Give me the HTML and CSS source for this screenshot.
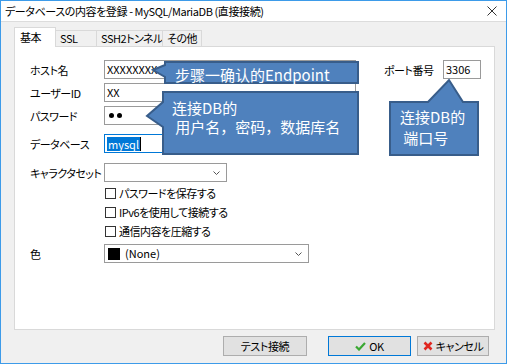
FILE: index.html
```html
<!DOCTYPE html>
<html>
<head>
    <title>データベースの内容を登録</title>
    <link rel="stylesheet" href="styles.css">
</head>
<body>
    <div class="window">
        <div class="titlebar">
            <span class="title">データベースの内容を登録 - MySQL/MariaDB (直接接続)</span>
            <svg class="close" width="10" height="10" viewBox="0 0 10 10">
                <path d="M0.5,0.5 L9.5,9.5 M9.5,0.5 L0.5,9.5" stroke="#333" stroke-width="1" fill="none"/>
            </svg>
        </div>

        <div class="tabs">
            <div class="tab active">基本</div>
            <div class="tab tab-ssl">SSL</div>
            <div class="tab tab-ssh">SSH2トンネル</div>
            <div class="tab tab-other">その他</div>
        </div>

        <div class="panel">
            <div class="row row-host">
                <span class="label">ホスト名</span>
                <div class="field wide">XXXXXXXX</div>
                <span class="label port-label">ポート番号</span>
                <div class="field port">3306</div>
            </div>
            <div class="row row-user">
                <span class="label">ユーザーID</span>
                <div class="field wide">XX</div>
            </div>
            <div class="row row-pw">
                <span class="label">パスワード</span>
                <div class="field wide"><span class="dot"></span><span class="dot"></span></div>
            </div>
            <div class="row row-db">
                <span class="label">データベース</span>
                <div class="field wide focused"><span class="selected">mysql</span><span class="caret"></span></div>
            </div>
            <div class="row row-charset">
                <span class="label">キャラクタセット</span>
                <div class="field combo charset">
                    <svg class="chevron" width="7" height="4" viewBox="0 0 7 4"><path d="M0.5,0.5 L3.5,3.5 L6.5,0.5" stroke="#555" fill="none"/></svg>
                </div>
            </div>
            <div class="check check-first"><span class="box"></span>パスワードを保存する</div>
            <div class="check"><span class="box"></span>IPv6を使用して接続する</div>
            <div class="check"><span class="box"></span>通信内容を圧縮する</div>
            <div class="row row-color">
                <span class="label">色</span>
                <div class="field combo color">
                    <span class="swatch"></span>(None)
                    <svg class="chevron" width="7" height="4" viewBox="0 0 7 4"><path d="M0.5,0.5 L3.5,3.5 L6.5,0.5" stroke="#555" fill="none"/></svg>
                </div>
            </div>
        </div>

        <div class="buttons">
            <button class="btn btn-test">テスト接続</button>
            <button class="btn btn-ok">
                <svg width="11" height="9" viewBox="0 0 11 9"><path d="M1,4.5 L4,7.5 L10,1" stroke="#3aa832" stroke-width="2.2" fill="none"/></svg>OK
            </button>
            <button class="btn btn-cancel">
                <svg width="10" height="10" viewBox="0 0 10 10"><path d="M1.5,1.5 L8.5,8.5 M8.5,1.5 L1.5,8.5" stroke="#e0261f" stroke-width="2.6" fill="none"/></svg>キャンセル
            </button>
        </div>

        <!-- annotation callouts drawn over the dialog -->
        <svg class="callouts" width="507" height="364" viewBox="0 0 507 364">
            <path d="M165,62 H358 V83 H165 V77 L153,70 L165,65 Z"/>
            <path d="M163,92 H358 V154 H163 V127 L147,116 L163,102 Z"/>
            <path d="M390,102 H428 L449,80 L463,102 H478 V155 H390 Z"/>
        </svg>
        <div class="note note-host">步骤一确认的Endpoint</div>
        <div class="note note-user">连接DB的<br>&nbsp;用户名，密码，数据库名</div>
        <div class="note note-port">连接DB的<br>&nbsp;端口号</div>
    </div>
</body>
</html>
```

FILE: styles.css
```css
/* Page */
body {
    margin: 0;
    font-family: "Noto Sans CJK JP", "Noto Sans", sans-serif;
    font-size: 11px;
    letter-spacing: -0.5px;
    font-feature-settings: "palt";
    color: #000;
    background-color: #fff;
}

/* Dialog window */
.window {
    position: relative;
    width: 507px;
    height: 364px;
    box-sizing: border-box;
    border: 1px solid #3d9be9;
    background-color: #f0f0f0;
}

.titlebar {
    display: flex;
    align-items: center;
    justify-content: space-between;
    height: 20px;
    padding: 0 9px 0 4px;
    background-color: #fff;
    border-bottom: 1px solid #dcdcdc;
}

    .titlebar .title {
        font-size: 11px;
        letter-spacing: -0.4px;
    }

/* Tabs */
.tabs {
    display: flex;
    align-items: flex-end;
    height: 19px;
    margin-top: 5px;
    padding-left: 13px;
}

.tab {
    position: relative;
    flex-shrink: 0;
    box-sizing: border-box;
    height: 16px;
    line-height: 15px;
    padding-left: 4px;
    white-space: nowrap;
    border: 1px solid #d9d9d9;
    border-bottom: none;
    margin-left: -1px;
    background-color: #f0f0f0;
}

    .tab.active {
        z-index: 1;
        height: 20px;
        line-height: 19px;
        width: 42px;
        padding-left: 5px;
        margin-left: 0;
        margin-bottom: -1px;
        background-color: #fff;
    }

.tab-ssl {
    width: 42px;
}

.tab-ssh {
    width: 67px;
}

.tab-other {
    width: 40px;
}

/* Tab panel */
.panel {
    width: 481px;
    height: 284px;
    margin-left: 13px;
    padding-top: 13px;
    box-sizing: border-box;
    border: 1px solid #d9d9d9;
    background-color: #fff;
}

.row {
    display: flex;
    align-items: center;
    height: 19px;
}

.label {
    width: 89px;
    padding-left: 15px;
    box-sizing: border-box;
    white-space: nowrap;
    flex-shrink: 0;
}

.port-label {
    width: 87px;
    padding-left: 28px;
}

.field {
    position: relative;
    height: 19px;
    box-sizing: border-box;
    border: 1px solid #9a9a9a;
    background-color: #fff;
    padding-left: 2px;
    line-height: 17px;
    display: flex;
    align-items: center;
    letter-spacing: 0;
}

.wide {
    width: 252px;
}

.port {
    width: 38px;
}

.row-user,
.row-pw {
    margin-top: 4px;
}

.row-db {
    margin-top: 9px;
}

.row-charset {
    margin-top: 10px;
}

.row-color {
    margin-top: 6px;
}

.dot {
    width: 5px;
    height: 5px;
    margin: 0 1px 0 2px;
    border-radius: 50%;
    background-color: #000;
}

.focused {
    border-color: #0078d7;
}

    .focused .selected {
        background-color: #0078d7;
        color: #fff;
        line-height: 14px;
        padding: 0 1px;
    }

    .focused .caret {
        width: 1px;
        height: 14px;
        background-color: #000;
    }

.combo .chevron {
    position: absolute;
    right: 6px;
    top: 7px;
}

.charset {
    width: 123px;
}

.color {
    width: 205px;
}

.swatch {
    width: 12px;
    height: 12px;
    margin: 0 5px 0 1px;
    background-color: #000;
}

/* Checkboxes */
.check {
    display: flex;
    align-items: center;
    height: 14px;
    margin-top: 5px;
    padding-left: 90px;
    white-space: nowrap;
}

.check-first {
    margin-top: 4px;
}

    .check .box {
        width: 11px;
        height: 11px;
        box-sizing: border-box;
        border: 1px solid #333;
        background-color: #fff;
        margin-right: 3px;
    }

/* Bottom buttons */
.buttons {
    display: flex;
    justify-content: flex-end;
    margin-top: 6px;
    padding-right: 17px;
}

.btn {
    display: flex;
    align-items: center;
    justify-content: center;
    gap: 3px;
    width: 83px;
    height: 20px;
    padding: 0;
    font-family: inherit;
    font-size: 11px;
    letter-spacing: -0.4px;
    font-feature-settings: "palt";
    color: #000;
    background-color: #e1e1e1;
    border: 1px solid #adadad;
}

.btn-test {
    width: 84px;
    margin-right: 21px;
}

.btn-ok {
    border-color: #0078d7;
    margin-right: 6px;
}

.btn-cancel {
    width: 72px;
}

/* Annotation callouts */
.callouts {
    position: absolute;
    top: -1px;
    left: -1px;
}

    .callouts path {
        fill: #4f81bd;
        stroke: #385d8a;
        stroke-width: 2;
    }

.note {
    position: absolute;
    font-family: "Noto Sans CJK SC", "Noto Sans", sans-serif;
    font-size: 15px;
    font-feature-settings: normal;
    letter-spacing: 0;
    line-height: 19px;
    color: #fff;
    white-space: nowrap;
}

.note-host {
    top: 64px;
    left: 174px;
}

.note-user {
    top: 97px;
    left: 171px;
}

.note-port {
    top: 105px;
    left: 399px;
    line-height: 21px;
}
```
